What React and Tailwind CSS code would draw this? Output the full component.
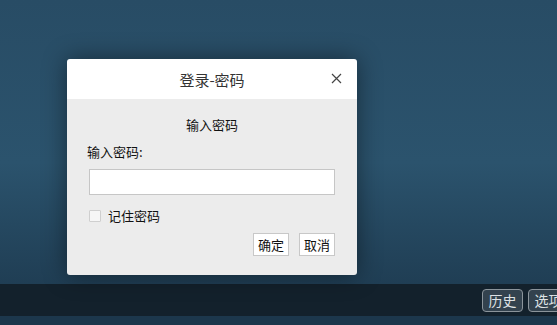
export default function App() {
  const font = { fontFamily: '"Noto Sans CJK SC", "Noto Sans", sans-serif' }
  return (
    <div
      className="w-[557px] h-[325px] overflow-hidden flex flex-col bg-gradient-to-b from-[#284c65] via-[#2b536d] to-[#1c374c]"
      style={font}
    >
      <div className="relative flex-1">
        {/* modal */}
        <div className="absolute left-[67px] top-[59px] w-[290px] h-[216px] rounded-[3px] overflow-hidden flex flex-col shadow-[0_0_24px_rgba(0,0,0,0.45)]">
          <div className="h-[40px] bg-white relative flex items-center justify-center">
            <span className="text-[15px] text-[#333] leading-none">登录-密码</span>
            <button className="absolute right-[15px] top-[14px] w-[11px] h-[11px] flex items-center justify-center">
              <svg width="11" height="11" viewBox="0 0 11 11">
                <path d="M1 1L10 10M10 1L1 10" stroke="#444" strokeWidth="1.2" fill="none" />
              </svg>
            </button>
          </div>
          <div className="flex-1 bg-[#ececec] px-[22px] pt-[17px] flex flex-col text-[13px] text-[#111]">
            <div className="text-center leading-[18px]">输入密码</div>
            <div className="mt-[9px] -ml-[2px] leading-[18px]">输入密码:</div>
            <input
              type="password"
              className="mt-[8px] h-[26px] w-full bg-white border border-[#c6c6c6] outline-none"
            />
            <label className="mt-[12px] flex items-center gap-[7px] leading-[18px]">
              <span className="w-[12px] h-[12px] border border-[#cfcfcf] bg-[#f6f6f6] rounded-[1px]" />
              <span>记住密码</span>
            </label>
            <div className="mt-[8px] flex justify-end gap-[10px]">
              <button className="w-[36px] h-[23px] bg-white border border-[#c8c8c8] text-[13px] leading-none text-[#111]">
                确定
              </button>
              <button className="w-[36px] h-[23px] bg-white border border-[#c8c8c8] text-[13px] leading-none text-[#111]">
                取消
              </button>
            </div>
          </div>
        </div>
      </div>
      <div className="h-[32px] bg-[#13212c] flex items-center justify-end gap-[5px]">
        <button className="w-[41px] h-[23px] rounded-[4px] border border-[#8b949b] bg-[#33424e] text-[14px] leading-none text-[#dde1e4]">
          历史
        </button>
        <button className="w-[41px] h-[23px] -mr-[12px] rounded-[4px] border border-[#8b949b] bg-[#33424e] text-[14px] leading-none text-[#dde1e4]">
          选项
        </button>
      </div>
      <div className="h-[9px] bg-[#1c374c]" />
    </div>
  )
}
